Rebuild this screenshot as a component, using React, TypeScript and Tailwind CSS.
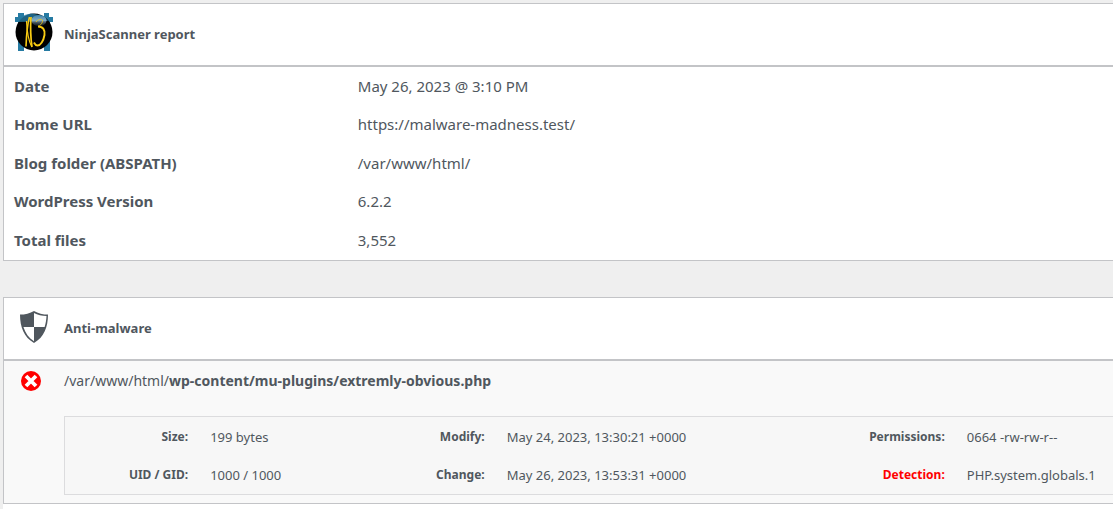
import React from "react";

const info: [string, string][] = [
  ["Date", "May 26, 2023 @ 3:10 PM"],
  ["Home URL", "https://malware-madness.test/"],
  ["Blog folder (ABSPATH)", "/var/www/html/"],
  ["WordPress Version", "6.2.2"],
  ["Total files", "3,552"],
];

type Detail = { label: string; value: string; alert?: boolean };

const details: Detail[][] = [
  [
    { label: "Size:", value: "199 bytes" },
    { label: "Modify:", value: "May 24, 2023, 13:30:21 +0000" },
    { label: "Permissions:", value: "0664 -rw-rw-r--" },
  ],
  [
    { label: "UID / GID:", value: "1000 / 1000" },
    { label: "Change:", value: "May 26, 2023, 13:53:31 +0000" },
    { label: "Detection:", value: "PHP.system.globals.1", alert: true },
  ],
];

function NinjaLogo() {
  return (
    <svg className="size-10" viewBox="0 0 40 40" aria-hidden="true">
      <defs>
        <linearGradient id="gloss" x1="0" y1="0" x2="0" y2="1">
          <stop offset="0" stopColor="#3f85ad" stopOpacity="0.9" />
          <stop offset="0.5" stopColor="#a5c3d8" stopOpacity="0.75" />
          <stop offset="1" stopColor="#33495c" stopOpacity="0.3" />
        </linearGradient>
      </defs>
      <path d="M4 0h6v3h20V0h5v4h4v5h-3v29h-6v-4H10v4H4V9H1V4h3z" fill="#267ba3" />
      <circle cx="20" cy="19" r="18.500" fill="#000" />
      <path d="M3 9C6 3.500 12 .8 18 .5L30 3 34 8 22 8.500z" fill="#267ba3" opacity="0.8" />
      <ellipse cx="25" cy="7.500" rx="7.500" ry="5.500" fill="url(#gloss)" />
      <path d="M15.500 4C13.500 11 12.500 20 12 33.500" fill="none" stroke="#f9cc13" strokeWidth="1.600" />
      <path d="M12.500 8C13 19 14 27 17.800 34" fill="none" stroke="#f9cc13" strokeWidth="1.200" />
      <path d="M17 4C16.300 14 16.500 24 18 34" fill="none" stroke="#f9cc13" strokeWidth="1.700" />
      <path d="M22 9C24 5.500 29 5.500 28.500 8.500 28 11 26 12.500 24 13.500" fill="none" stroke="#f9cc13" strokeWidth="1" opacity="0.8" />
      <path d="M24 13.500C29 13.500 31.300 17 30.500 22 29.500 28 26.500 32.500 23.500 32.500 21.500 32.500 20.800 31 20 29.500" fill="none" stroke="#f9cc13" strokeWidth="1.900" />
    </svg>
  );
}

function ShieldIcon() {
  return (
    <svg className="h-8 w-7" viewBox="0 0 28 32" aria-hidden="true" fill="#50575e">
      <path
        fillRule="evenodd"
        d="M14 0c4 2.500 9 3.600 14 3.600C28 16 24 26.500 14 32 4 26.500 0 16 0 3.600 5 3.600 10 2.500 14 0zM14 2v14h10.600c1.200-3.500 1.700-7 1.900-10.900C22 4.900 17.500 4 14 2zM14 16H3.400c2 6 5.300 11 10.600 14.200z"
      />
    </svg>
  );
}

function DismissIcon() {
  return (
    <svg className="size-5" viewBox="0 0 20 20" role="img" aria-label="Infected">
      <circle cx="10" cy="10" r="10" fill="#f00" />
      <path d="M5 5l10 10m0-10L5 15" stroke="#fff" strokeWidth="3.800" />
    </svg>
  );
}

function CardHeader({ icon, title }: { icon: React.ReactNode; title: string }) {
  return (
    <header className="flex h-[63px] items-center border-b-2 border-[#c3c4c7]">
      <span className="flex w-[60px] justify-center pb-1">{icon}</span>
      <h2 className="text-[13px] font-bold">{title}</h2>
    </header>
  );
}

export default function App() {
  return (
    <main className="min-h-screen bg-[#efefef] pl-[3px] pt-[3px] font-['Noto_Sans','Open_Sans',sans-serif] text-sm text-[#50575e]">
      <section className="border-y border-l border-[#c3c4c7] bg-white">
        <CardHeader icon={<NinjaLogo />} title="NinjaScanner report" />
        <table className="h-[193px] w-full table-fixed text-left text-[15px]">
          <tbody>
            {info.map(([label, value]) => (
              <tr key={label}>
                <th scope="row" className="w-[31%] pl-[10px] font-bold">{label}</th>
                <td className="pl-[10px]">{value}</td>
              </tr>
            ))}
          </tbody>
        </table>
      </section>

      <section className="mt-9 border-y border-l border-[#c3c4c7] bg-[#f9f9f9] pb-2">
        <div className="bg-white">
          <CardHeader icon={<ShieldIcon />} title="Anti-malware" />
        </div>
        <div className="flex h-10 items-center">
          <span className="flex w-[60px] justify-center pr-1.5">
            <DismissIcon />
          </span>
          <p>
            /var/www/html/<strong>wp-content/mu-plugins/extremly-obvious.php</strong>
          </p>
        </div>
        <div className="ml-[60px] mt-[15px] border-y border-l border-[#dcdcde] bg-[#f7f7f7] pt-px">
          <table className="w-full table-fixed text-[13px]">
            <colgroup>
              <col className="w-[12.8%]" />
              <col className="w-[14.2%]" />
              <col className="w-[14.1%]" />
              <col className="w-[21.9%]" />
              <col className="w-[22%]" />
              <col className="w-[15%]" />
            </colgroup>
            <tbody>
              {details.map((row) => (
                <tr key={row[0].label} className="h-[38px]">
                  {row.map(({ label, value, alert }) => (
                    <React.Fragment key={label}>
                      <th
                        scope="row"
                        className={`px-[11px] text-right text-xs font-bold ${alert ? "text-[#f00]" : ""}`}
                      >
                        {label}
                      </th>
                      <td className="whitespace-nowrap px-[11px]">{value}</td>
                    </React.Fragment>
                  ))}
                </tr>
              ))}
            </tbody>
          </table>
        </div>
      </section>
      <div className="h-[5px] bg-white" />
    </main>
  );
}
